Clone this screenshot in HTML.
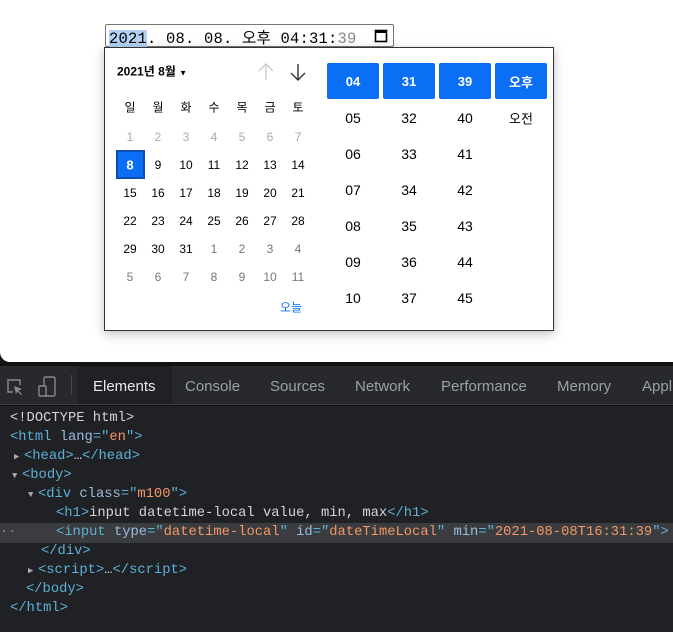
<!DOCTYPE html>
<html><head><meta charset="utf-8"><style>
*{margin:0;padding:0;box-sizing:border-box}
body{width:673px;height:632px;overflow:hidden;background:#111214;position:relative;font-family:"Liberation Sans","Noto Sans CJK KR",sans-serif}
.top{position:absolute;left:0;top:0;width:673px;height:362px;background:#fff;border-radius:0 0 0 10px}
.inp{position:absolute;left:105px;top:24px;width:289px;height:23px;border:1px solid #767676;border-radius:2px;font:15.5px "Liberation Mono","Noto Sans CJK KR",monospace;padding:1px 0 0 3px;color:#000;white-space:pre;letter-spacing:0.2px}
.sel{background:#b3d1f5}
.pop{position:absolute;left:104px;top:47px;width:450px;height:284px;background:#fff;border:1px solid #333;box-shadow:0 3px 10px rgba(0,0,0,.25)}
.a{position:absolute;transform:translate(-50%,-50%);font-size:13px;color:#000;white-space:nowrap}
.g{color:#aaa}.g2{color:#777}
.bt{position:absolute;width:52px;height:36px;background:#0a6ff5;color:#fff;font-weight:bold;font-size:13px;display:flex;align-items:center;justify-content:center;border-radius:2px}
.tb{position:absolute;left:0;top:366px;width:673px;height:39px;background:#28292c;border-bottom:1px solid #3d3e42}
.tab{position:absolute;top:12px;font-size:15px;color:#9aa0a6}
.code{position:absolute;left:0;top:406px;width:673px;height:226px;background:#202124;font:13.8px "Liberation Mono",monospace;color:#d5d5d5}
.l{position:absolute;white-space:pre;height:19px;line-height:19px}
.t{color:#5db0d7}.v{color:#f29766}.at{color:#9bbbdc}
.tr{font-size:9px;color:#aaa;display:inline-block;width:10px}
</style></head><body>
<div class="top"></div>
<div class="inp"><span class="sel">2021</span>. 08. 08. 오후 04:31:<span style="color:#888">39</span></div>
<svg style="position:absolute;left:374px;top:28px" width="14" height="15"><rect x="1.5" y="2.5" width="11" height="11" fill="none" stroke="#000" stroke-width="1.6"/><rect x="1.5" y="2.5" width="11" height="2.5" fill="#000"/></svg>
<div class="pop">
<div class="a" style="left:12px;top:23px;transform:translateY(-50%);font-weight:bold;font-size:12px">2021년 8월 <span style="font-size:8px">▼</span></div>
<svg style="position:absolute;left:152px;top:14px" width="18" height="20"><path d="M9 2V18M2 9L9 2L16 9" fill="none" stroke="#ccc" stroke-width="1.4"/></svg>
<svg style="position:absolute;left:184px;top:14px" width="18" height="20"><path d="M9 2V18M2 11L9 18L16 11" fill="none" stroke="#333" stroke-width="1.4"/></svg>
<div style="position:absolute;left:11px;top:102px;width:29px;height:29px;background:#0a6ff5;border:2px solid #0a4fb0"></div>
<div id="cal"></div>
<div class="a" style="left:186px;top:259px;color:#0a6ff5;font-size:12px">오늘</div>
<div class="bt" style="left:222px;top:15px">04</div>
<div class="bt" style="left:278px;top:15px">31</div>
<div class="bt" style="left:334px;top:15px">39</div>
<div class="bt" style="left:390px;top:15px">오후</div>
<div id="tm"></div>
</div>
<div class="tb">
<svg style="position:absolute;left:6px;top:12px" width="18" height="18"><path d="M7 14H2V2H14V7" fill="none" stroke="#8a8a8a" stroke-width="1.4"/><path d="M8 8L16 11L12.5 12.5L16 16L15 17L11.5 13.5L10 16Z" fill="#8a8a8a"/></svg>
<svg style="position:absolute;left:37px;top:10px" width="20" height="22"><rect x="7" y="1" width="11" height="19" rx="1.5" fill="none" stroke="#8a8a8a" stroke-width="1.4"/><rect x="2" y="10" width="7" height="10" rx="1" fill="#28292c" stroke="#8a8a8a" stroke-width="1.4"/></svg>
<div style="position:absolute;left:71px;top:9px;width:1px;height:20px;background:#4a4a4a"></div>
<div style="position:absolute;left:78px;top:0;width:94px;height:38px;background:#202124"></div>
<div class="tab" style="left:93px;color:#e8eaed">Elements</div>
<div class="tab" style="left:185px">Console</div>
<div class="tab" style="left:270px">Sources</div>
<div class="tab" style="left:355px">Network</div>
<div class="tab" style="left:441px">Performance</div>
<div class="tab" style="left:557px">Memory</div>
<div class="tab" style="left:642px">Appl</div>
</div>
<div class="code">
<div style="position:absolute;left:0;top:117px;width:673px;height:20px;background:#3b3c3f"></div>
<div class="l" style="left:10px;top:3px">&lt;!DOCTYPE html&gt;</div>
<div class="l" style="left:10px;top:22px"><span class="t">&lt;html </span><span class="at">lang</span><span class="t">="</span><span class="v">en</span><span class="t">"&gt;</span></div>
<div class="l" style="left:14px;top:41px"><span class="tr">▶</span><span class="t">&lt;head&gt;</span>…<span class="t">&lt;/head&gt;</span></div>
<div class="l" style="left:12px;top:60px"><span class="tr">▼</span><span class="t">&lt;body&gt;</span></div>
<div class="l" style="left:28px;top:79px"><span class="tr">▼</span><span class="t">&lt;div </span><span class="at">class</span><span class="t">="</span><span class="v">m100</span><span class="t">"&gt;</span></div>
<div class="l" style="left:56px;top:98px"><span class="t">&lt;h1&gt;</span>input datetime-local value, min, max<span class="t">&lt;/h1&gt;</span></div>
<div class="l" style="left:0px;top:117px"><span style="color:#888">··</span></div>
<div class="l" style="left:56px;top:117px"><span class="t">&lt;input </span><span class="at">type</span><span class="t">="</span><span class="v">datetime-local</span><span class="t">" </span><span class="at">id</span><span class="t">="</span><span class="v">dateTimeLocal</span><span class="t">" </span><span class="at">min</span><span class="t">="</span><span class="v">2021-08-08T16:31:39</span><span class="t">"&gt;</span></div>
<div class="l" style="left:41px;top:136px"><span class="t">&lt;/div&gt;</span></div>
<div class="l" style="left:28px;top:155px"><span class="tr">▶</span><span class="t">&lt;script&gt;</span>…<span class="t">&lt;/script&gt;</span></div>
<div class="l" style="left:26px;top:174px"><span class="t">&lt;/body&gt;</span></div>
<div class="l" style="left:10px;top:193px"><span class="t">&lt;/html&gt;</span></div>
</div>
<script>
var c='',xs=[25,53,81,109,137,165,193];
var hd=['일','월','화','수','목','금','토'];
hd.forEach((h,i)=>c+=`<div class="a" style="left:${xs[i]}px;top:59px;font-size:12px">${h}</div>`);
var rows=[[1,2,3,4,5,6,7],[8,9,10,11,12,13,14],[15,16,17,18,19,20,21],[22,23,24,25,26,27,28],[29,30,31,1,2,3,4],[5,6,7,8,9,10,11]];
rows.forEach((r,ri)=>r.forEach((d,i)=>{var cl='';if(ri==0)cl='g';if(ri==4&&i>2||ri==5)cl='g2';if(ri==1&&i==0)c+=`<div class="a" style="left:${xs[i]}px;top:${89+ri*28}px;color:#fff;font-weight:bold">${d}</div>`;else c+=`<div class="a ${cl}" style="left:${xs[i]}px;top:${89+ri*28}px;font-size:12px">${d}</div>`}));
document.getElementById('cal').innerHTML=c;
var t='',cols=[[5,6,7,8,9,10],[32,33,34,35,36,37],[40,41,42,43,44,45]],cx=[248,304,360];
cols.forEach((col,ci)=>col.forEach((n,ri)=>t+=`<div class="a" style="left:${cx[ci]}px;top:${70+ri*36}px;font-size:14px">${String(n).padStart(2,'0')}</div>`));
t+=`<div class="a" style="left:416px;top:70px;font-size:13px">오전</div>`;
document.getElementById('tm').innerHTML=t;
</script>
</body></html>
